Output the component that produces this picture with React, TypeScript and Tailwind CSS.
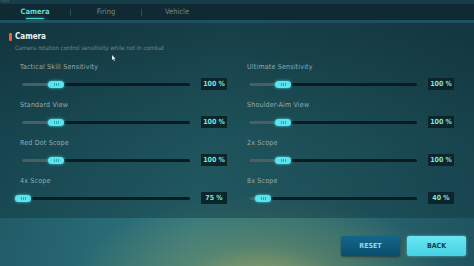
import React from "react";

type Setting = { label: string; value: string; thumb: number };

const leftCol: Setting[] = [
  { label: "Tactical Skill Sensitivity", value: "100 %", thumb: 26 },
  { label: "Standard View", value: "100 %", thumb: 26 },
  { label: "Red Dot Scope", value: "100 %", thumb: 26 },
  { label: "4x Scope", value: "75 %", thumb: -7 },
];

const rightCol: Setting[] = [
  { label: "Ultimate Sensitivity", value: "100 %", thumb: 26 },
  { label: "Shoulder-Aim View", value: "100 %", thumb: 26 },
  { label: "2x Scope", value: "100 %", thumb: 26 },
  { label: "8x Scope", value: "40 %", thumb: 6 },
];

const font = "font-['Liberation_Sans_Narrow','DejaVu_Sans_Condensed',sans-serif]";

function Slider({ s }: { s: Setting }) {
  return (
    <div className="flex flex-col">
      <div className="h-[8px] text-[7px] leading-[8px] text-[#96abb0] tracking-[0.2px]">{s.label}</div>
      <div className="mt-[7px] flex h-[12px] items-center">
        <div className="relative ml-[2px] h-[3px] w-[168px] rounded-full bg-[#0a1c21]">
          <div
            className="absolute left-0 top-0 h-[3px] rounded-full bg-[#4b5f63]"
            style={{ width: Math.max(s.thumb, 0) + 4 }}
          />
          <div
            className="absolute top-[-2px] flex h-[7px] w-[16px] items-center justify-center gap-[1px] rounded-full bg-[#5ae4ee] shadow-[0_0_3px_#3fd6e4]"
            style={{ left: s.thumb }}
          >
            <span className="h-[3px] w-[1px] bg-[#2aa7b5]" />
            <span className="h-[3px] w-[1px] bg-[#2aa7b5]" />
            <span className="h-[3px] w-[1px] bg-[#2aa7b5]" />
          </div>
        </div>
        <div className="ml-[11px] flex h-[12px] w-[26px] items-center justify-center bg-[#0c252b] text-[7px] font-bold text-[#7ee6dc]">
          {s.value}
        </div>
      </div>
    </div>
  );
}

export default function App() {
  return (
    <div
      className={`${font} relative flex h-[266px] w-[474px] flex-col overflow-hidden bg-[radial-gradient(ellipse_40%_35%_at_55%_108%,#9ea466_0%,rgba(130,150,100,0.45)_45%,transparent_100%),linear-gradient(100deg,#1e5662_0%,#2f7780_45%,#2a6a72_70%,#1f5360_100%)]`}
    >
      {/* top strip */}
      <div className="h-[4px] bg-[#163e48]">
        <span className="ml-[1px] block text-[3px] leading-[3px] text-[#4d7880]">Game</span>
      </div>

      {/* tabs */}
      <div className="flex h-[16px] items-center bg-[#0f2a32]">
        <div className="relative flex h-full w-[70px] items-center justify-center">
          <span className="text-[7.5px] font-bold text-[#6ad8d4]">Camera</span>
          <span className="absolute bottom-[1px] left-[26px] h-[1px] w-[18px] bg-[#4ccfcf] shadow-[0_0_3px_#4ccfcf]" />
        </div>
        <span className="h-[7px] w-[1px] bg-[#2d4d55]" />
        <div className="flex h-full w-[70px] items-center justify-center">
          <span className="text-[7.5px] text-[#6f8a90]">Firing</span>
        </div>
        <span className="h-[7px] w-[1px] bg-[#2d4d55]" />
        <div className="flex h-full w-[70px] items-center justify-center">
          <span className="text-[7.5px] text-[#6f8a90]">Vehicle</span>
        </div>
      </div>
      <div className="h-[3px] bg-[#1e5060]" />

      {/* content panel */}
      <div className="h-[195px] bg-[linear-gradient(180deg,rgba(12,38,46,0.7)_0%,rgba(14,48,56,0.5)_60%,rgba(16,52,60,0.45)_100%)]">
        <div className="ml-[9px] mt-[9px] flex items-center">
          <span className="h-[8px] w-[3px] rounded-[1px] bg-[#f0622e]" />
          <span className="ml-[3px] text-[8px] font-bold leading-[9px] text-[#eef4f5]">Camera</span>
        </div>
        <div className="ml-[15px] mt-[3px] text-[6px] leading-[7px] text-[#6e8a90]">
          Camera rotation control sensitivity while not in combat
        </div>
        <div className="relative">
          <svg className="absolute left-[112px] top-[4px]" width="4" height="6" viewBox="0 0 4 6">
            <path d="M0 0 L0 5 L1.2 4 L2.2 6 L3 5.6 L2 3.8 L3.6 3.8 Z" fill="#e8eef0" />
          </svg>
        </div>
        <div className="ml-[20px] mt-[12px] grid w-[434px] grid-cols-[227px_207px] gap-y-[11px]">
          {leftCol.map((s, i) => (
            <React.Fragment key={s.label}>
              <Slider s={s} />
              <Slider s={rightCol[i]} />
            </React.Fragment>
          ))}
        </div>
      </div>

      {/* bottom buttons */}
      <div className="flex flex-1 justify-end gap-[7px] pr-[8px] pt-[18px]">
        <button className="flex h-[20px] w-[59px] items-center justify-center rounded-[2px] bg-[linear-gradient(180deg,#13678a,#0b4d6c)] text-[7px] font-bold text-[#8fdcec] shadow-[0_1px_2px_rgba(0,0,0,0.4)]">
          RESET
        </button>
        <button className="flex h-[20px] w-[59px] items-center justify-center rounded-[2px] bg-[linear-gradient(180deg,#6ae6f2,#46d2e4)] text-[7px] font-bold text-[#0f3e4e] shadow-[0_0_3px_rgba(120,230,240,0.6)]">
          BACK
        </button>
      </div>
    </div>
  );
}
